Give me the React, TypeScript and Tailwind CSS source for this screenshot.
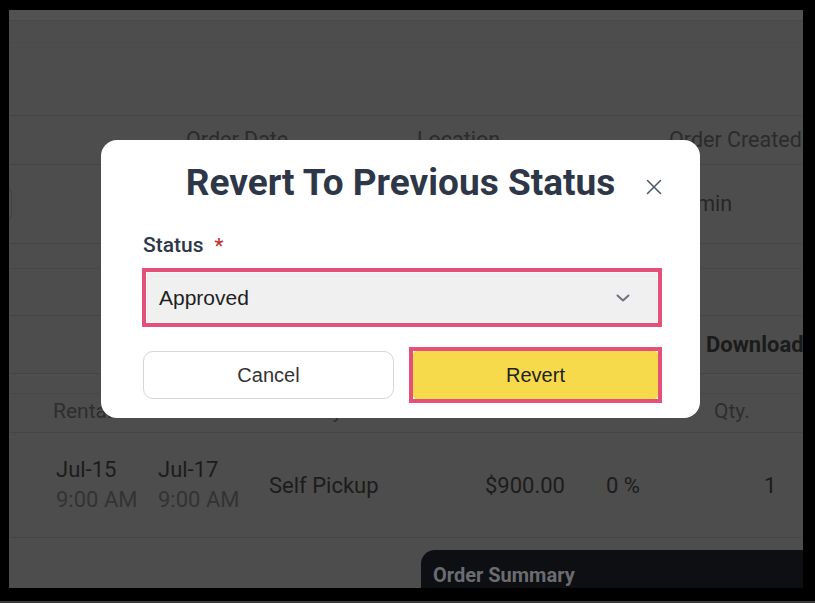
import React from 'react'

const XIcon = () => (
  <svg width="16" height="16" viewBox="0 0 16 16" fill="none">
    <path d="M1.5 1.5l13 13M14.5 1.5l-13 13" stroke="#4a5568" strokeWidth="1.5" strokeLinecap="round" />
  </svg>
)

const Chevron = () => (
  <svg width="14" height="8" viewBox="0 0 14 8" fill="none">
    <path d="M1.5 1.5L7 6.5l5.5-5" stroke="#6b7280" strokeWidth="2" strokeLinecap="round" strokeLinejoin="round" />
  </svg>
)

const RevertModal = () => {
  const [status] = React.useState('Approved')
  return (
    <div className="absolute left-[92px] top-[130px] h-[278px] w-[599px] rounded-[16px] bg-white px-[42px] font-['Roboto',sans-serif]">
      <div className="mt-[21px] flex h-[44px] items-center justify-center">
        <h2 className="whitespace-nowrap text-[37px] font-bold leading-[44px] text-[#2d3748]">Revert To Previous Status</h2>
      </div>
      <button className="absolute left-[545px] top-[39px]">
        <XIcon />
      </button>

      <div className="mt-[27px] flex h-[28px] items-center text-[21px] font-medium text-[#2d3748]">
        Status
        <span className="ml-[11px] text-[20px] text-[#c53030]">*</span>
      </div>

      <div className="-ml-px mt-[8px] h-[59px] w-[520px] border-4 border-[#e5507a]">
        <div className="flex h-full items-center justify-between border border-[#f7f7f7] bg-[#f0f0f0] pl-[12px] pr-[27px] font-['Liberation_Sans',sans-serif] text-[21px] text-[#1f1f1f]">
          {status}
          <Chevron />
        </div>
      </div>

      <div className="mt-[20px] flex h-[56px] items-center">
        <button className="h-[48px] w-[251px] shrink-0 rounded-[10px] border border-[#d6d6d6] bg-white font-['Liberation_Sans',sans-serif] text-[20px] text-[#333]">
          Cancel
        </button>
        <div className="ml-[15px] h-[56px] w-[253px] shrink-0 border-4 border-[#e5507a]">
          <button className="h-full w-full rounded-[4px] bg-[#f6da4b] font-['Liberation_Sans',sans-serif] text-[20px] text-[#222]">
            Revert
          </button>
        </div>
      </div>
    </div>
  )
}

export default function App() {
  return (
    <div className="flex h-[603px] w-[815px] flex-col bg-black">
      <div className="mt-[10px] pl-[9px]">
        <div className="relative h-[578px] w-[794px] overflow-hidden bg-[#4d4d4d] font-['Roboto',sans-serif] text-[20px]">
          <div className="h-[11px] border-b border-[#474747] bg-[#525252]" />
          <div className="h-[22px] border-b border-[#4a4a4a]" />
          <div className="h-[73px] border-b border-[#454545]" />

          <div className="flex h-[49px] items-center whitespace-nowrap border-b border-[#454545] pl-[177px] text-[21.5px] text-[#2b2b2b]">
            <div className="w-[231px]">Order Date</div>
            <div className="w-[252px]">Location</div>
            <div>Order Created</div>
          </div>

          <div className="flex h-[79px] items-center border-b border-[#454545] text-[21.5px] text-[#262626]">
            <div className="-ml-[37px] h-[40px] w-[40px] shrink-0 rounded-[10px] border border-[#434343]" />
            <div className="ml-[658px]">Admin</div>
          </div>

          <div className="h-[25px] border-b border-[#484848]" />
          <div className="h-[47px] border-b border-[#454545]" />

          <div className="flex h-[58px] items-center whitespace-nowrap border-b border-[#454545] pl-[697px] text-[22px] font-bold text-[#1b1b1b]">
            Download
          </div>

          <div className="h-[20px] border-b border-[#484848]" />

          <div className="flex h-[39px] items-center border-b border-[#454545] pb-[2px] pl-[44px] text-[21px] text-[#2e2e2e]">
            <div className="w-[105px]">Rental</div>
            <div className="w-[111px]">Return</div>
            <div className="w-[216px]">Delivery</div>
            <div className="w-[121px]">Rate</div>
            <div className="w-[108px]">Tax</div>
            <div>Qty.</div>
          </div>

          <div className="flex h-[105px] items-center border-b border-[#454545] pl-[47px] text-[22px] text-[#1c1c1c]">
            <div className="w-[102px] leading-[30px]">
              <div>Jul-15</div>
              <div className="text-[#333]">9:00 AM</div>
            </div>
            <div className="w-[111px] leading-[30px]">
              <div>Jul-17</div>
              <div className="text-[#333]">9:00 AM</div>
            </div>
            <div className="w-[216px]">Self Pickup</div>
            <div className="w-[121px]">$900.00</div>
            <div className="w-[158px]">0 %</div>
            <div>1</div>
          </div>

          <div className="-mr-[30px] ml-[412px] mt-[12px] h-[60px] rounded-t-[14px] bg-[#0e0f13] pl-[12px] pt-[11px] text-[20px] font-bold leading-[28px] text-[#6b6c70]">
            Order Summary
          </div>

          <RevertModal />
        </div>
      </div>
      <div className="mt-auto h-[2px] bg-[#3a3a3a]" />
    </div>
  )
}
